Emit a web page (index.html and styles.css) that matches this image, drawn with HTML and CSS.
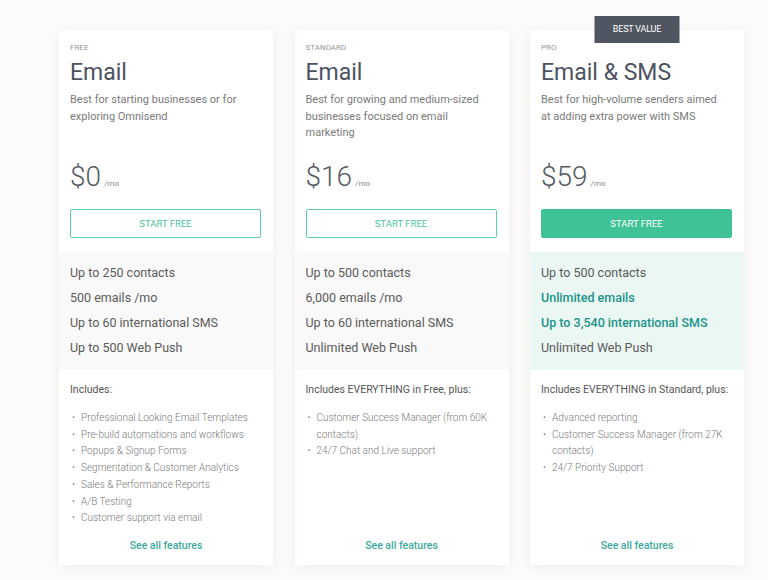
FILE: index.html
```html
<!DOCTYPE html>
<html>
<head>
<meta charset="utf-8">
<link rel="stylesheet" href="styles.css">
</head>
<body>
<div class="plans">
  <div class="card">
    <div class="top">
      <div class="tier">FREE</div>
      <h2 class="title">Email</h2>
      <p class="desc">Best for starting businesses or for exploring Omnisend</p>
      <div class="price"><span class="amount">$0</span><span class="per">/mo</span></div>
      <a class="btn">START FREE</a>
    </div>
    <ul class="limits">
      <li>Up to 250 contacts</li>
      <li>500 emails /mo</li>
      <li>Up to 60 international SMS</li>
      <li>Up to 500 Web Push</li>
    </ul>
    <div class="includes">
      <div class="inc-title">Includes:</div>
      <ul class="inc-list">
        <li>Professional Looking Email Templates</li>
        <li>Pre-build automations and workflows</li>
        <li>Popups &amp; Signup Forms</li>
        <li>Segmentation &amp; Customer Analytics</li>
        <li>Sales &amp; Performance Reports</li>
        <li>A/B Testing</li>
        <li>Customer support via email</li>
      </ul>
    </div>
    <a class="see-all">See all features</a>
  </div>

  <div class="card">
    <div class="top">
      <div class="tier">STANDARD</div>
      <h2 class="title">Email</h2>
      <p class="desc">Best for growing and medium-sized businesses focused on email marketing</p>
      <div class="price"><span class="amount">$16</span><span class="per">/mo</span></div>
      <a class="btn">START FREE</a>
    </div>
    <ul class="limits">
      <li>Up to 500 contacts</li>
      <li>6,000 emails /mo</li>
      <li>Up to 60 international SMS</li>
      <li>Unlimited Web Push</li>
    </ul>
    <div class="includes">
      <div class="inc-title">Includes EVERYTHING in Free, plus:</div>
      <ul class="inc-list">
        <li>Customer Success Manager (from 60K contacts)</li>
        <li>24/7 Chat and Live support</li>
      </ul>
    </div>
    <a class="see-all">See all features</a>
  </div>

  <div class="card featured">
    <div class="badge">BEST VALUE</div>
    <div class="top">
      <div class="tier">PRO</div>
      <h2 class="title">Email &amp; SMS</h2>
      <p class="desc">Best for high-volume senders aimed at adding extra power with SMS</p>
      <div class="price"><span class="amount">$59</span><span class="per">/mo</span></div>
      <a class="btn solid">START FREE</a>
    </div>
    <ul class="limits mint">
      <li>Up to 500 contacts</li>
      <li class="hl">Unlimited emails</li>
      <li class="hl">Up to 3,540 international SMS</li>
      <li>Unlimited Web Push</li>
    </ul>
    <div class="includes">
      <div class="inc-title">Includes EVERYTHING in Standard, plus:</div>
      <ul class="inc-list">
        <li>Advanced reporting</li>
        <li>Customer Success Manager (from 27K contacts)</li>
        <li>24/7 Priority Support</li>
      </ul>
    </div>
    <a class="see-all">See all features</a>
  </div>
</div>
</body>
</html>
```

FILE: styles.css
```css
* { box-sizing: border-box; }
html, body { margin: 0; padding: 0; }
body {
  background: #fcfbf9;
  font-family: Roboto, "Liberation Sans", sans-serif;
  width: 768px;
  height: 580px;
  overflow: hidden;
}
.plans {
  display: grid;
  grid-template-columns: repeat(3, 214px);
  column-gap: 21.5px;
  padding: 30px 0 0 59px;
  height: 565px;
}
.card {
  position: relative;
  background: #fff;
  box-shadow: 0 2px 12px rgba(0,0,0,0.06);
  display: flex;
  flex-direction: column;
}
.badge {
  position: absolute;
  top: -14px;
  left: 50%;
  transform: translateX(-50%);
  width: 85px;
  height: 27px;
  background: #4f5661;
  color: #fff;
  font-size: 9px;
  line-height: 27px;
  text-align: center;
  letter-spacing: -0.2px;
}
.top {
  padding: 13px 15px 14px 11px;
}
.tier {
  font-size: 8px;
  color: #999;
  line-height: 10px;
}
.title {
  margin: 6px 0 0;
  font-size: 23px;
  font-weight: 400;
  color: #4c5260;
  line-height: 28px;
}
.desc {
  margin: 5px 0 0;
  font-size: 11px;
  line-height: 16.6px;
  color: #7a7a7a;
  height: 50px;
}
.price {
  margin-top: 20px;
  display: flex;
  align-items: baseline;
  height: 30px;
}
.amount {
  font-size: 28px;
  font-weight: 300;
  color: #555a63;
  line-height: 30px;
}
.per {
  font-size: 8px;
  color: #888;
  margin-left: 3px;
}
.btn {
  display: block;
  margin-top: 17px;
  margin-right: -3px;
  height: 29px;
  border: 1px solid #5fcfa7;
  border-radius: 2px;
  color: #4cc49c;
  font-size: 9.5px;
  line-height: 27px;
  text-align: center;
}
.btn.solid {
  background: #40c297;
  border-color: #40c297;
  color: #fff;
}
.limits {
  list-style: none;
  margin: 0;
  padding: 8px 11px 10px;
  background: #f9f9f9;
  height: 118px;
}
.limits li {
  font-size: 12.5px;
  line-height: 25px;
  color: #5a5a5a;
}
.limits.mint { background: #ebf7f3; }
.limits li.hl { color: #21938a; font-weight: 500; }
.includes {
  padding: 13px 11px 0;
}
.inc-title {
  font-size: 10.5px;
  color: #555;
  line-height: 14px;
}
.inc-list {
  list-style: none;
  margin: 13px 0 0;
  padding: 0;
}
.inc-list li {
  position: relative;
  padding-left: 11px;
  font-size: 10px;
  line-height: 16.7px;
  color: #7a7a7a;
  font-weight: 300;
}
.inc-list li::before {
  content: "\00B7";
  position: absolute;
  left: 2px;
  top: 0;
  font-weight: 700;
}
.see-all {
  margin-top: auto;
  padding-bottom: 13px;
  text-align: center;
  font-size: 10.5px;
  font-weight: 500;
  color: #3ba99b;
}
```
